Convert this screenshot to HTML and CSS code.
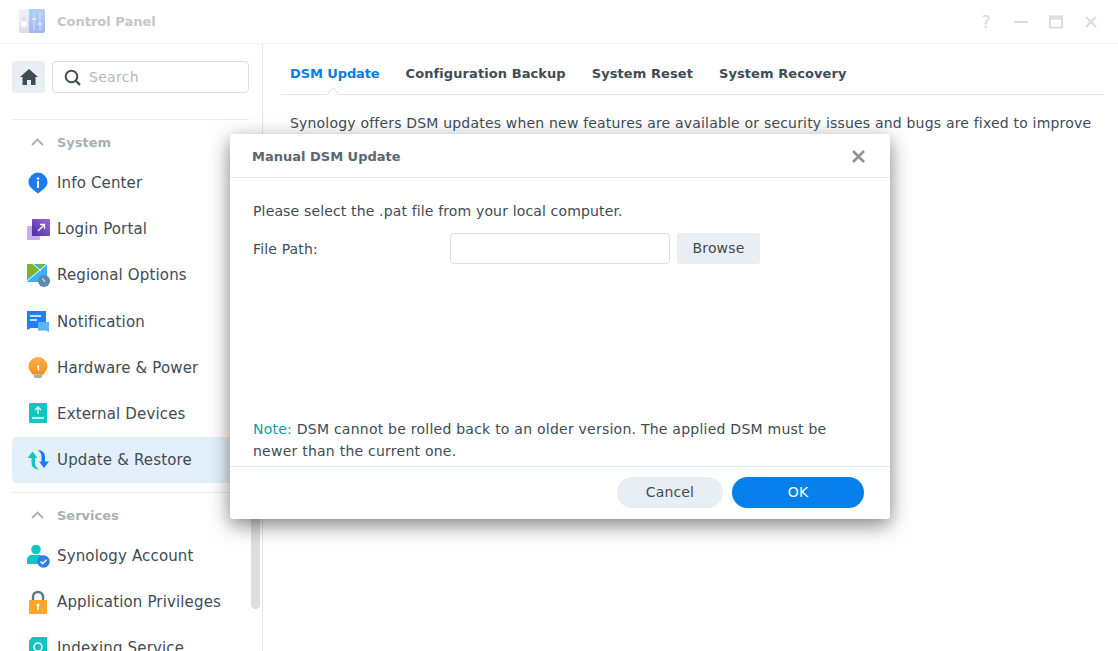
FILE: index.html
```html
<!DOCTYPE html>
<html>
    <head>
        <title>Control Panel</title>
        <link rel="stylesheet" href="styles.css">
    </head>
    <body>
        <div class="window">
            <div class="titlebar">
                <svg class="app-icon" width="28" height="28" viewBox="0 0 28 28">
                    <defs>
                        <linearGradient id="panelLeft" x1="0" y1="0" x2="0" y2="1"><stop offset="0" stop-color="#f2f3f9"/><stop offset="1" stop-color="#dcdce8"/></linearGradient>
                        <linearGradient id="panelRight" x1="0" y1="0" x2="0" y2="1"><stop offset="0" stop-color="#a8d4f5"/><stop offset="1" stop-color="#a9b4ee"/></linearGradient>
                        <linearGradient id="portal" x1="1" y1="0" x2="0" y2="1"><stop offset="0" stop-color="#9a6ad6"/><stop offset="1" stop-color="#4a2ba8"/></linearGradient>
                        <linearGradient id="bulb" x1="0" y1="0" x2="0" y2="1"><stop offset="0" stop-color="#fbb04a"/><stop offset="1" stop-color="#f7901e"/></linearGradient>
                    </defs>
                    <rect x="1" y="1" width="26" height="24" rx="2" fill="url(#panelLeft)"/>
                    <path d="M11 1h14a2 2 0 0 1 2 2v20a2 2 0 0 1-2 2H11z" fill="url(#panelRight)"/>
                    <circle cx="6" cy="16" r="3" fill="#fff"/>
                    <path d="M6 9v3M16 4v18M22 4v18" stroke="#c3dcf5" stroke-width="1.5"/>
                    <path d="M14 11h4M20 16h4" stroke="#d8e8f8" stroke-width="2"/>
                </svg>
                <span class="app-title">Control Panel</span>
                <div class="win-buttons">
                    <span class="win-help">?</span>
                    <svg width="14" height="14" viewBox="0 0 14 14"><path d="M0 7h14" stroke="#dcdcdc" stroke-width="2"/></svg>
                    <svg width="14" height="14" viewBox="0 0 14 14"><rect x="1" y="1.500" width="12" height="11" fill="none" stroke="#dcdcdc" stroke-width="2"/><path d="M1 3.500h12" stroke="#dcdcdc" stroke-width="2"/></svg>
                    <svg width="14" height="14" viewBox="0 0 14 14"><path d="M2 2l10 10M12 2L2 12" stroke="#dcdcdc" stroke-width="2.200"/></svg>
                </div>
            </div>
            <div class="content">
                <div class="sidebar">
                    <div class="search-row">
                        <div class="home-btn">
                            <svg width="18" height="16" viewBox="0 0 18 16"><path d="M9 0L0 8h2.500v8h4.500v-5h4v5h4.500V8H18z" fill="#414b55"/></svg>
                        </div>
                        <div class="search">
                            <svg width="17" height="17" viewBox="0 0 17 17"><circle cx="7.500" cy="7.500" r="5.800" fill="none" stroke="#414b55" stroke-width="2"/><path d="M11.800 11.800L16 16" stroke="#414b55" stroke-width="2.200"/></svg>
                            <span>Search</span>
                        </div>
                    </div>
                    <div class="group first">
                        <svg class="chevron" width="13" height="8" viewBox="0 0 13 8"><path d="M1 7l5.500-5.500L12 7" fill="none" stroke="#a9afb6" stroke-width="1.800"/></svg>
                        <span>System</span>
                    </div>
                    <div class="item">
                        <svg width="24" height="24" viewBox="0 0 24 24"><path d="M12 1.500a9.800 9.800 0 0 1 9.500 9.800c0 4-3.800 7.200-9.500 11.200-5.700-4-9.500-7.200-9.500-11.200A9.800 9.800 0 0 1 12 1.500z" fill="#1a7cf0"/><circle cx="12" cy="7.500" r="1.300" fill="#fff"/><rect x="11" y="10" width="2" height="7" fill="#fff"/></svg>
                        <span>Info Center</span>
                    </div>
                    <div class="item">
                        <svg width="24" height="24" viewBox="0 0 24 24"><rect x="1" y="9" width="13" height="14" rx="1" fill="#c9aeee"/><rect x="6" y="2" width="18" height="17" rx="1" fill="url(#portal)"/><path d="M12 14l6-6M14 7.500h4.500V12" fill="none" stroke="#fff" stroke-width="1.300"/></svg>
                        <span>Login Portal</span>
                    </div>
                    <div class="item">
                        <svg width="24" height="24" viewBox="0 0 24 24"><path d="M1 1h20v18H1z" fill="#3fb0f2"/><path d="M1 1h6l7 6L1 15z" fill="#7ab82a"/><path d="M11 1h8l-3.500 4z" fill="#7ab82a"/><path d="M7 1l8 7M21 1L1 18" stroke="#fff" stroke-width="1"/><circle cx="18" cy="18" r="6" fill="#5f87ad"/><path d="M16.500 15.500l2.500 3.500" stroke="#e6edf5" stroke-width="1.200"/></svg>
                        <span>Regional Options</span>
                    </div>
                    <div class="item">
                        <svg width="24" height="24" viewBox="0 0 24 24"><path d="M1 1h19v17H5l-4 2z" fill="#1f80f5"/><path d="M4 6h11M4 10h7" stroke="#fff" stroke-width="1.500"/><path d="M12 12h11v10l-3-1.500h-8z" fill="#5bb4fa"/></svg>
                        <span>Notification</span>
                    </div>
                    <div class="item">
                        <svg width="24" height="24" viewBox="0 0 24 24"><path d="M12 1a9.500 9.500 0 0 1 9.500 9.500c0 3.500-2.700 5-3.700 8H6.200c-1-3-3.700-4.500-3.700-8A9.500 9.500 0 0 1 12 1z" fill="url(#bulb)"/><path d="M7.500 18.500h9l-1 3.500h-7z" fill="#a8adb3"/><path d="M11 11l1.500-1v4.500" fill="none" stroke="#fff" stroke-width="1.300"/></svg>
                        <span>Hardware &amp; Power</span>
                    </div>
                    <div class="item">
                        <svg width="24" height="24" viewBox="0 0 24 24"><rect x="3" y="1" width="18" height="20" rx="1" fill="#12c5c2"/><path d="M12 12V5M9 8l3-3 3 3" fill="none" stroke="#fff" stroke-width="1.300"/><path d="M6 16h12" stroke="#fff" stroke-width="1.500"/></svg>
                        <span>External Devices</span>
                    </div>
                    <div class="item active">
                        <svg width="24" height="24" viewBox="0 0 24 24"><path d="M1.500 10l5-6.500 5 6.500H9v5c0 3 1.500 5 4 6.500-5 0-7.500-3-7.500-6.500v-5z" fill="#12c5c2"/><path d="M23 13.500l-5 6.500-5-6.500h2.500v-5c0-3-1.500-5-4-6.500 5 0 7.500 3 7.500 6.500v5z" fill="#1a7cf0"/></svg>
                        <span>Update &amp; Restore</span>
                    </div>
                    <div class="group second">
                        <svg class="chevron" width="13" height="8" viewBox="0 0 13 8"><path d="M1 7l5.500-5.500L12 7" fill="none" stroke="#a9afb6" stroke-width="1.800"/></svg>
                        <span>Services</span>
                    </div>
                    <div class="item">
                        <svg width="24" height="24" viewBox="0 0 24 24"><circle cx="10" cy="5.500" r="4.800" fill="#12c5c2"/><path d="M1 20v-4c0-3 2-5 5-5h8c2 0 3 1 3 2v7z" fill="#12c5c2"/><circle cx="17.500" cy="17.500" r="6.200" fill="#2f7ced"/><path d="M14.500 17.500l2.200 2.200 3.800-4" fill="none" stroke="#fff" stroke-width="1.500"/></svg>
                        <span>Synology Account</span>
                    </div>
                    <div class="item">
                        <svg width="24" height="24" viewBox="0 0 24 24"><path d="M7 12V7a5 5 0 0 1 10 0v5" fill="none" stroke="#5f7590" stroke-width="2.400"/><rect x="3" y="10" width="18" height="14" rx="1" fill="#fba52f"/><circle cx="12" cy="15" r="1.600" fill="#fff"/><rect x="11.200" y="15" width="1.600" height="5" fill="#fff"/></svg>
                        <span>Application Privileges</span>
                    </div>
                    <div class="item">
                        <svg width="24" height="24" viewBox="0 0 24 24"><path d="M6 1h15v21H3V5z" fill="#12c5c2"/><circle cx="12" cy="11" r="4" fill="none" stroke="#fff" stroke-width="1.500"/></svg>
                        <span>Indexing Service</span>
                    </div>
                    <div class="scroll-thumb"></div>
                </div>
                <div class="main">
                    <div class="tabs">
                        <span class="tab selected">DSM Update</span>
                        <span class="tab">Configuration Backup</span>
                        <span class="tab">System Reset</span>
                        <span class="tab">System Recovery</span>
                    </div>
                    <p class="intro">Synology offers DSM updates when new features are available or security issues and bugs are fixed to improve</p>
                </div>
            </div>
            <div class="dialog">
                <div class="dialog-head">
                    <span>Manual DSM Update</span>
                    <svg width="13" height="13" viewBox="0 0 13 13"><path d="M1 1l11 11M12 1L1 12" stroke="#8b939b" stroke-width="2.600"/></svg>
                </div>
                <div class="dialog-body">
                    <p class="lead">Please select the .pat file from your local computer.</p>
                    <div class="file-row">
                        <label>File Path:</label>
                        <div class="file-input"></div>
                        <div class="browse">Browse</div>
                    </div>
                    <p class="note"><span>Note:</span> DSM cannot be rolled back to an older version. The applied DSM must be newer than the current one.</p>
                </div>
                <div class="dialog-foot">
                    <div class="btn cancel">Cancel</div>
                    <div class="btn ok">OK</div>
                </div>
            </div>
        </div>
    </body>
</html>
```

FILE: styles.css
```css
html, body {
    margin: 0;
    height: 100%;
    overflow: hidden;
    background: white;
}
body {
    font-family: "DejaVu Sans", sans-serif;
    font-size: 14px;
    letter-spacing: 0.15px;
    color: #414b55;
}
.window {
    position: relative;
    height: 651px;
    overflow: hidden;
}
.titlebar {
    height: 43px;
    border-bottom: 1px solid #f1f3f5;
    display: flex;
    align-items: center;
    padding: 0 20px 0 18px;
}
.app-icon {
    margin-right: 11px;
}
.app-title {
    font-size: 13px;
    font-weight: bold;
    letter-spacing: 0;
    color: #c4c6c8;
}
.win-buttons {
    margin-left: auto;
    display: flex;
    align-items: center;
    gap: 21px;
}
.win-help {
    font-size: 18px;
    color: #dcdcdc;
    width: 14px;
    text-align: center;
}
.content {
    display: flex;
    height: 607px;
}
.sidebar {
    position: relative;
    width: 262px;
    flex: none;
    border-right: 1px solid #dfe6ec;
    overflow: hidden;
}
.search-row {
    display: flex;
    gap: 7px;
    margin: 17px 13px 0 12px;
    height: 32px;
}
.home-btn {
    width: 33px;
    border-radius: 3px;
    background: #e9eef5;
    display: flex;
    align-items: center;
    justify-content: center;
}
.search {
    flex: 1;
    box-sizing: border-box;
    border: 1px solid #d7e0e8;
    border-radius: 4px;
    display: flex;
    align-items: center;
    gap: 8px;
    padding-left: 11px;
    letter-spacing: 0.3px;
    color: #b4b8bd;
}
.group {
    display: flex;
    align-items: center;
    height: 44px;
    padding-left: 19px;
    font-size: 13px;
    font-weight: bold;
    letter-spacing: 0;
    color: #a9afb6;
    margin: 0 13px 0 12px;
}
.group span {
    margin-left: 13px;
}
.group.first {
    margin-top: 26px;
    border-top: 1px solid #e8ecf0;
}
.group.second {
    margin-top: 9px;
    border-top: 1px solid #e8ecf0;
}
.item {
    display: flex;
    align-items: center;
    gap: 7px;
    height: 46.200px;
    margin: 0 13px 0 12px;
    padding-left: 14px;
    font-size: 15px;
    border-radius: 5px;
}
.item svg {
    flex: none;
}
.item.active {
    background: #e3f0fc;
}
.group + .item {
    margin-top: -4px;
}
.group.second + .item {
    margin-top: -4.400px;
}
.scroll-thumb {
    position: absolute;
    right: 2px;
    top: 110px;
    height: 455px;
    width: 9px;
    border-radius: 5px;
    background: #dedede;
}
.main {
    flex: 1;
    padding: 0 14px 0 18px;
}
.tabs {
    display: flex;
    gap: 26px;
    height: 50px;
    align-items: center;
    padding-left: 9px;
    border-bottom: 1px solid #dfe6ec;
    font-size: 13px;
    font-weight: bold;
    letter-spacing: 0.08px;
}
.tab {
    padding-top: 8px;
}
.tab.selected {
    position: relative;
    letter-spacing: -0.1px;
    color: #0a7be0;
}
.tab.selected::after {
    content: "";
    position: absolute;
    left: 39px;
    bottom: -16px;
    width: 7px;
    height: 7px;
    transform: rotate(45deg);
    background: white;
    border-left: 1px solid #dfe6ec;
    border-top: 1px solid #dfe6ec;
}
.intro {
    margin: 20px 0 0 9px;
    letter-spacing: 0.19px;
    white-space: nowrap;
}
.dialog {
    position: absolute;
    left: 230px;
    top: 134px;
    width: 660px;
    height: 385px;
    display: flex;
    flex-direction: column;
    background: white;
    border-radius: 3px;
    box-shadow: 0 6px 20px rgba(0, 0, 0, 0.5);
}
.dialog-head {
    flex: none;
    height: 44px;
    box-sizing: border-box;
    padding: 1px 25px 0 22px;
    border-bottom: 1px solid #e3e9ef;
    display: flex;
    align-items: center;
    justify-content: space-between;
    font-size: 13px;
    font-weight: bold;
    letter-spacing: 0;
    color: #5d6670;
}
.dialog-body {
    flex: 1;
    display: flex;
    flex-direction: column;
    padding: 0 23px;
}
.lead {
    margin: 25px 0 0;
}
.file-row {
    display: flex;
    align-items: center;
    margin-top: 14px;
    height: 31px;
}
.file-row label {
    width: 197px;
    flex: none;
}
.file-input {
    box-sizing: border-box;
    width: 220px;
    height: 31px;
    border: 1px solid #d7e0e8;
    border-radius: 4px;
}
.browse {
    margin-left: 7px;
    width: 83px;
    height: 31px;
    line-height: 31px;
    text-align: center;
    border-radius: 3px;
    background: #e9eef5;
}
.note {
    margin: auto 0 4px;
    line-height: 22px;
    letter-spacing: 0.24px;
}
.note span {
    color: #0d9da8;
}
.dialog-foot {
    flex: none;
    height: 53px;
    border-top: 1px solid #e3e9ef;
    display: flex;
    justify-content: flex-end;
    align-items: flex-start;
    gap: 9px;
    padding: 10px 26px 0 0;
    box-sizing: border-box;
}
.btn {
    height: 31px;
    line-height: 31px;
    border-radius: 16px;
    text-align: center;
}
.cancel {
    width: 106px;
    background: #e9eef5;
}
.ok {
    width: 132px;
    background: #057feb;
    color: white;
}
```
